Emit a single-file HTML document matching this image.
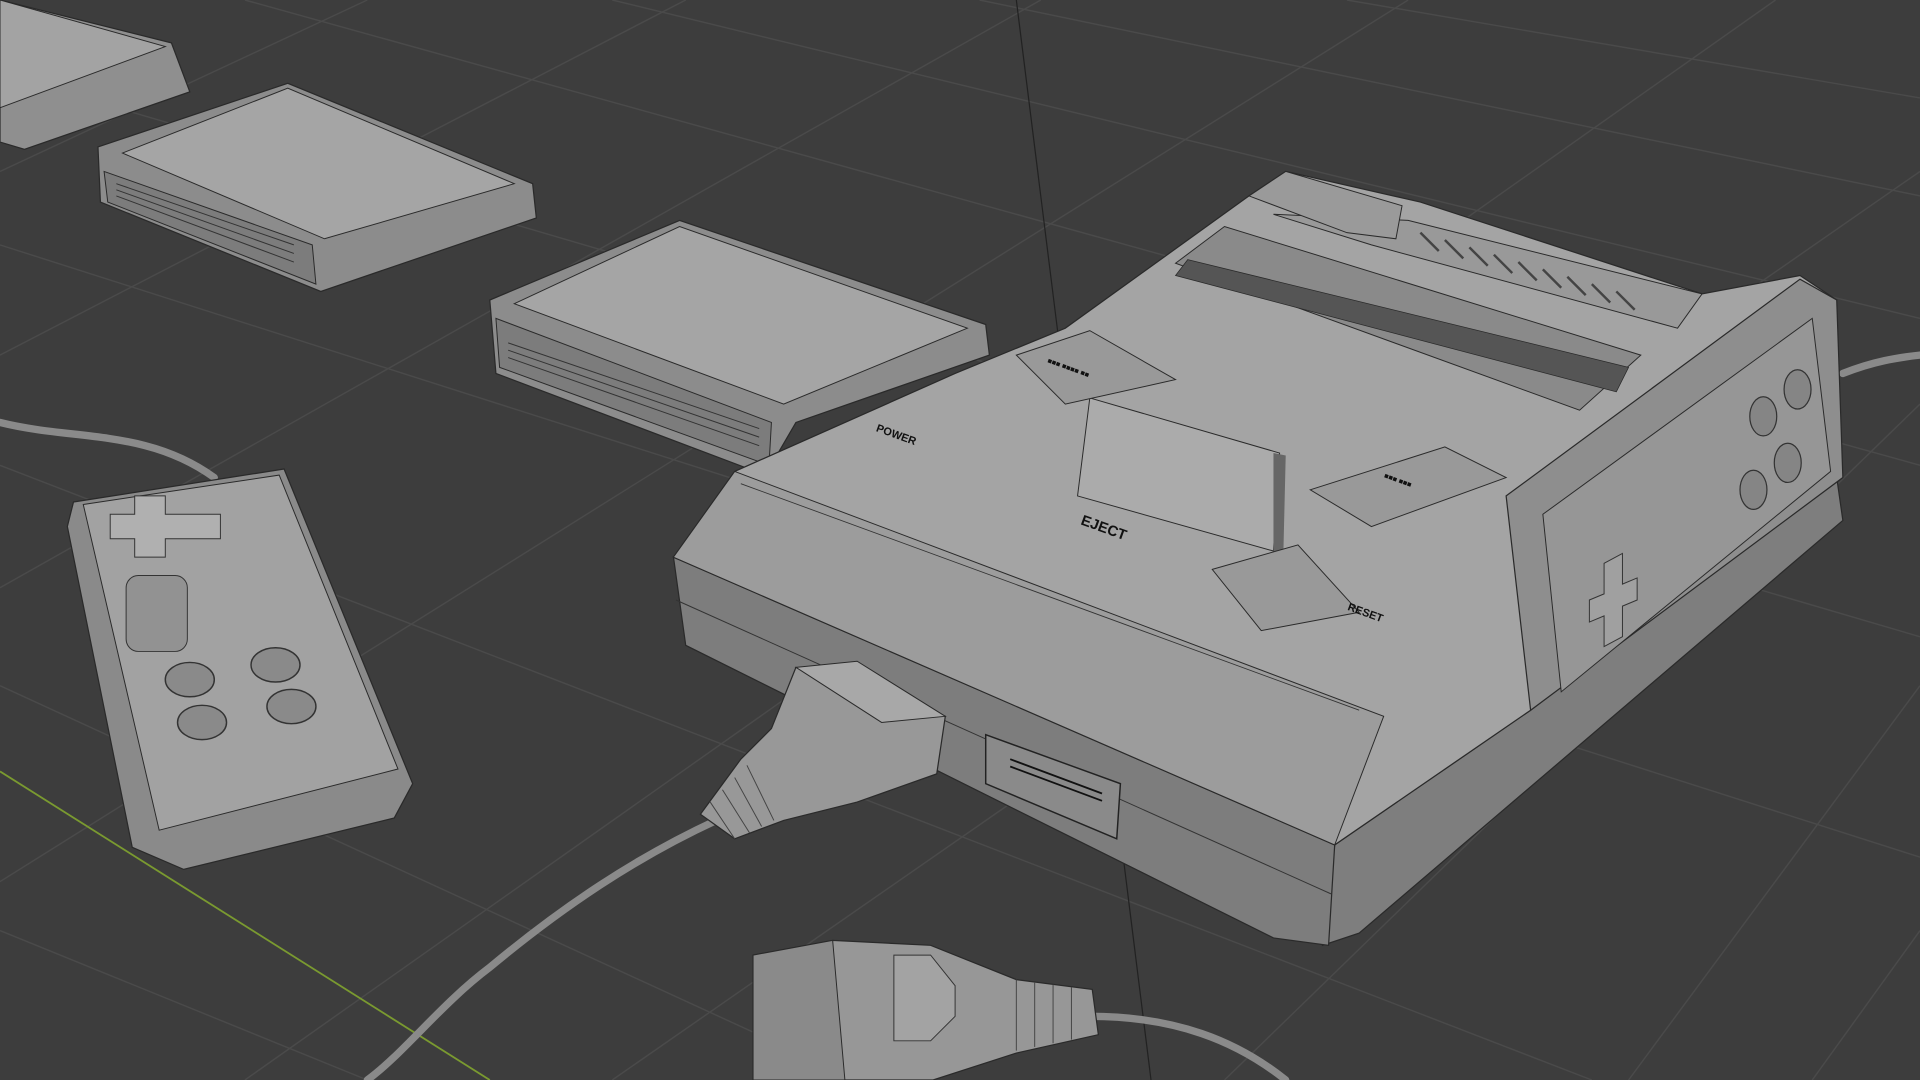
<!DOCTYPE html>
<html><head><meta charset="utf-8"><style>
html,body{margin:0;padding:0;background:#3c3c3c;overflow:hidden}
svg{display:block}
text{font-family:"Liberation Sans",sans-serif;font-weight:bold}
</style></head><body>
<svg width="1920" height="1080" viewBox="0 0 1568 882" preserveAspectRatio="none" xmlns="http://www.w3.org/2000/svg">
<rect width="1568" height="882" fill="#3d3d3d"/>
<g stroke="#4a4a4a" stroke-width="1.2" fill="none">
<line x1="0" y1="200" x2="1568" y2="700"/><line x1="0" y1="60" x2="1568" y2="520"/><line x1="200" y1="0" x2="1568" y2="380"/>
<line x1="500" y1="0" x2="1568" y2="260"/><line x1="800" y1="0" x2="1568" y2="160"/><line x1="0" y1="380" x2="1300" y2="882"/>
<line x1="0" y1="560" x2="700" y2="882"/><line x1="0" y1="760" x2="300" y2="882"/><line x1="1100" y1="0" x2="1568" y2="80"/>
<line x1="1568" y1="330" x2="1000" y2="882"/><line x1="1568" y1="560" x2="1330" y2="882"/><line x1="1450" y1="0" x2="200" y2="882"/>
<line x1="1150" y1="0" x2="0" y2="720"/><line x1="850" y1="0" x2="0" y2="480"/><line x1="560" y1="0" x2="0" y2="290"/>
<line x1="300" y1="0" x2="0" y2="140"/><line x1="1568" y1="140" x2="500" y2="882"/><line x1="1568" y1="760" x2="1480" y2="882"/>
</g>
<line x1="0" y1="630" x2="400" y2="882" stroke="#7a9a30" stroke-width="1.5"/>
<line x1="830" y1="0" x2="940" y2="882" stroke="#222" stroke-width="1"/>
<g fill="none" stroke="#8a8a8a" stroke-width="6" stroke-linecap="round">
<path d="M0 345 C60 360 120 350 175 390"/>
<path d="M1505 305 C1530 295 1550 292 1568 290"/>
<path d="M585 670 C520 700 460 740 400 790 C360 820 330 860 300 882"/>
<path d="M890 830 C960 830 1010 850 1050 882"/>
</g>
<polygon points="0,0 140,35 155,75 20,122 0,116" fill="#8f8f8f" stroke="#2a2a2a" stroke-width="1"/>
<polygon points="0,0 135,38 0,88" fill="#a3a3a3" stroke="#2a2a2a" stroke-width="0.8"/>
<polygon points="80,120 235,68 435,150 438,178 262,238 82,165" fill="#8c8c8c" stroke="#2a2a2a" stroke-width="1"/>
<polygon points="100,125 235,72 420,150 265,195" fill="#a5a5a5" stroke="#2a2a2a" stroke-width="0.8"/>
<polygon points="85,140 255,200 258,232 88,165" fill="#7c7c7c" stroke="#2a2a2a" stroke-width="0.8"/>
<g stroke="#333" stroke-width="0.8"><line x1="95" y1="150" x2="240" y2="200"/><line x1="95" y1="155" x2="240" y2="207"/><line x1="95" y1="160" x2="240" y2="214"/></g>
<polygon points="400,245 555,180 805,265 808,290 650,345 625,388 405,305" fill="#8c8c8c" stroke="#2a2a2a" stroke-width="1"/>
<polygon points="420,248 555,185 790,268 640,330" fill="#a5a5a5" stroke="#2a2a2a" stroke-width="0.8"/>
<polygon points="405,260 630,345 628,380 408,300" fill="#7c7c7c" stroke="#2a2a2a" stroke-width="0.8"/>
<g stroke="#333" stroke-width="0.8"><line x1="415" y1="280" x2="620" y2="350"/><line x1="415" y1="286" x2="620" y2="357"/><line x1="415" y1="292" x2="620" y2="364"/></g>
<polygon points="60,410 232,383 337,640 322,668 150,710 108,692 55,430" fill="#8a8a8a" stroke="#2a2a2a" stroke-width="1"/>
<polygon points="68,412 228,388 325,628 130,678" fill="#a2a2a2" stroke="#2a2a2a" stroke-width="0.8"/>
<path d="M110 405 h25 v15 h45 v20 h-45 v15 h-25 v-15 h-20 v-20 h20z" fill="#b0b0b0" stroke="#333" stroke-width="0.8"/>
<rect x="103" y="470" width="50" height="62" rx="10" fill="#929292" stroke="#333" stroke-width="0.8"/>
<g fill="#8a8a8a" stroke="#333" stroke-width="1.2">
<ellipse cx="155" cy="555" rx="20" ry="14"/><ellipse cx="225" cy="543" rx="20" ry="14"/>
<ellipse cx="165" cy="590" rx="20" ry="14"/><ellipse cx="238" cy="577" rx="20" ry="14"/></g>
<polygon points="1090,690 1250,580 1500,390 1505,425 1110,762 1080,772" fill="#7e7e7e" stroke="#2a2a2a" stroke-width="1"/>
<polygon points="550,455 1090,690 1085,772 1040,766 560,527" fill="#7d7d7d" stroke="#2a2a2a" stroke-width="1"/>
<line x1="552" y1="490" x2="1087" y2="730" stroke="#333" stroke-width="0.8"/>
<polygon points="550,455 600,385 780,305 870,268 1020,160 1050,140 1160,165 1390,240 1470,225 1500,245 1250,580 1090,690" fill="#a4a4a4" stroke="#2a2a2a" stroke-width="1"/>
<polygon points="550,455 600,385 1130,585 1090,690" fill="#9c9c9c" stroke="#2a2a2a" stroke-width="0.8"/>
<line x1="605" y1="395" x2="1110" y2="580" stroke="#333" stroke-width="0.7"/>
<polygon points="960,215 1000,185 1340,290 1290,335" fill="#8a8a8a" stroke="#2a2a2a" stroke-width="0.8"/>
<polygon points="970,212 1330,300 1320,320 960,225" fill="#555" stroke="#2a2a2a" stroke-width="0.6"/>
<polygon points="1040,175 1150,180 1390,240 1370,268 1120,200" fill="#999" stroke="#2a2a2a" stroke-width="0.8"/>
<polygon points="890,325 1045,370 1040,450 880,405" fill="#ababab" stroke="#2a2a2a" stroke-width="0.8"/>
<polygon points="1040,370 1050,372 1048,455 1040,452" fill="#666"/>
<polygon points="1070,400 1180,365 1230,390 1120,430" fill="#999" stroke="#2a2a2a" stroke-width="0.8"/>
<polygon points="990,465 1060,445 1110,500 1030,515" fill="#999" stroke="#2a2a2a" stroke-width="0.8"/>
<polygon points="830,290 890,270 960,310 870,330" fill="#999" stroke="#2a2a2a" stroke-width="0.8"/>
<text x="715" y="352" font-size="9" fill="#111" transform="rotate(20 715 352)">POWER</text>
<text x="882" y="428" font-size="12" fill="#111" transform="rotate(20 882 428)">EJECT</text>
<text x="1100" y="498" font-size="9" fill="#111" transform="rotate(20 1100 498)">RESET</text>
<text x="855" y="296" font-size="6" fill="#111" transform="rotate(20 855 296)">■■■ ■■■■ ■■</text>
<text x="1130" y="390" font-size="6" fill="#111" transform="rotate(20 1130 390)">■■■ ■■■</text>
<polygon points="1230,405 1470,228 1500,245 1505,390 1250,580" fill="#8e8e8e" stroke="#2a2a2a" stroke-width="1"/>
<polygon points="1260,420 1480,260 1495,385 1275,565" fill="#969696" stroke="#2a2a2a" stroke-width="0.8"/>
<g fill="#858585" stroke="#333" stroke-width="1">
<ellipse cx="1440" cy="340" rx="11" ry="16"/><ellipse cx="1468" cy="318" rx="11" ry="16"/>
<ellipse cx="1432" cy="400" rx="11" ry="16"/><ellipse cx="1460" cy="378" rx="11" ry="16"/></g>
<path d="M1310 460 l15 -8 v25 l12 -5 v18 l-12 5 v25 l-15 8 v-25 l-12 5 v-18 l12 -5z" fill="#a0a0a0" stroke="#333" stroke-width="0.8"/>
<polygon points="1020,160 1050,140 1145,168 1140,195 1100,190" fill="#9a9a9a" stroke="#2a2a2a" stroke-width="0.8"/>
<g stroke="#444" stroke-width="2"><line x1="1160" y1="190" x2="1175" y2="205"/><line x1="1180" y1="196" x2="1195" y2="211"/><line x1="1200" y1="202" x2="1215" y2="217"/><line x1="1220" y1="208" x2="1235" y2="223"/><line x1="1240" y1="214" x2="1255" y2="229"/><line x1="1260" y1="220" x2="1275" y2="235"/><line x1="1280" y1="226" x2="1295" y2="241"/><line x1="1300" y1="232" x2="1315" y2="247"/><line x1="1320" y1="238" x2="1335" y2="253"/></g>
<polygon points="805,600 915,640 912,685 805,640" fill="#8a8a8a" stroke="#222" stroke-width="1.2"/>
<g stroke="#111" stroke-width="1.5"><line x1="825" y1="620" x2="900" y2="648"/><line x1="825" y1="626" x2="900" y2="654"/></g>
<polygon points="572,665 605,620 630,595 650,545 772,585 765,632 700,655 640,670 600,685" fill="#989898" stroke="#2a2a2a" stroke-width="1"/>
<polygon points="650,545 700,540 772,585 720,590" fill="#a8a8a8" stroke="#2a2a2a" stroke-width="0.8"/>
<g stroke="#444" stroke-width="0.8"><line x1="580" y1="655" x2="600" y2="685"/><line x1="590" y1="645" x2="612" y2="680"/><line x1="600" y1="635" x2="622" y2="675"/><line x1="610" y1="625" x2="632" y2="670"/></g>
<polygon points="615,780 680,768 760,772 830,800 892,808 897,845 830,860 762,882 615,882" fill="#979797" stroke="#2a2a2a" stroke-width="1"/>
<polygon points="615,780 680,768 690,882 615,882" fill="#8a8a8a" stroke="#2a2a2a" stroke-width="0.8"/>
<path d="M730 780 h30 l20 25 v25 l-20 20 h-30z" fill="#a3a3a3" stroke="#333" stroke-width="0.8"/>
<g stroke="#444" stroke-width="0.8"><line x1="830" y1="800" x2="830" y2="858"/><line x1="845" y1="802" x2="845" y2="855"/><line x1="860" y1="804" x2="860" y2="852"/><line x1="875" y1="806" x2="875" y2="849"/></g>
</svg>
</body></html>
